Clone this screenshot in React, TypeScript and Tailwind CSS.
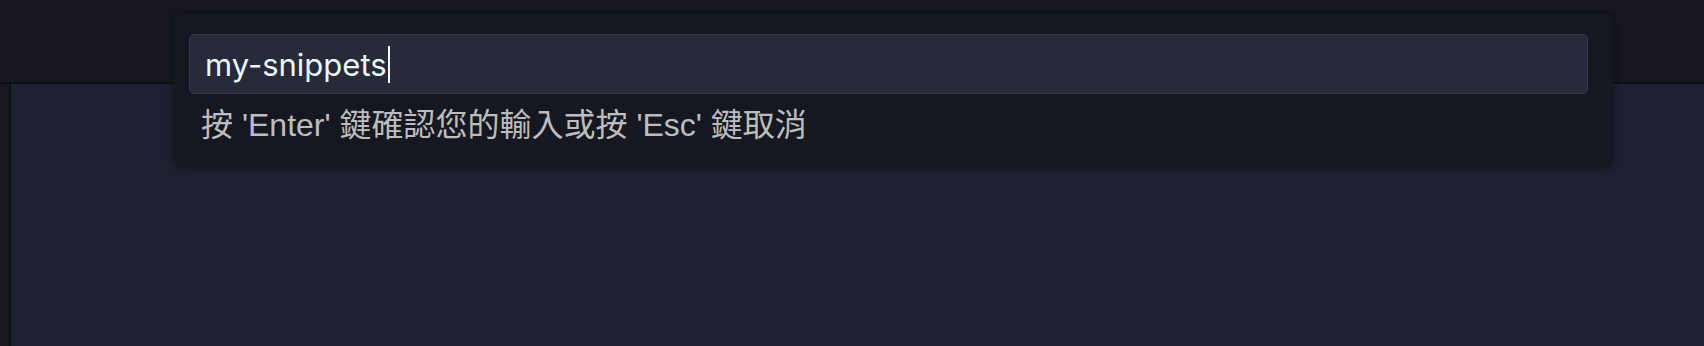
const App = () => {
  const value = "my-snippets";
  const hint = "按 'Enter' 鍵確認您的輸入或按 'Esc' 鍵取消";

  return (
    <div className="relative flex h-[346px] w-[1704px] flex-col overflow-hidden bg-[#1f2030]">
      {/* title bar */}
      <div className="h-[84px] w-full shrink-0 border-b-2 border-[#0f1015] bg-[#16171f]" />

      {/* workbench */}
      <div className="flex w-full flex-1 flex-row">
        <div className="w-[11px] shrink-0 border-r-2 border-[#0f1015] bg-[#171820]" />
        <div className="flex-1 bg-[#1f2030]" />
      </div>

      {/* quick input */}
      <div className="absolute top-[14px] left-[174px] flex h-[154px] w-[1439px] flex-col rounded-[10px] bg-[#161821] pt-[20px] pr-[25px] pl-[15px] shadow-[0_0_10px_rgba(0,0,0,0.45)]">
        <div className="flex h-[60px] w-full items-center rounded-[5px] border border-[#34364a] bg-[#282a39] pl-[15px]">
          <span className="font-['Inter','Liberation_Sans',sans-serif] text-[31px] leading-none text-[#e8f8fb]">
            {value}
          </span>
          <span className="ml-[1px] h-[37px] w-[2px] bg-[#e8f8fb]" />
        </div>
        <p className="mt-[12px] pl-[12px] font-['Liberation_Sans','Noto_Sans_CJK_TC',sans-serif] text-[32px] leading-[38px] text-[#bdbdbd]">
          {hint}
        </p>
      </div>
    </div>
  );
};

export default App;
